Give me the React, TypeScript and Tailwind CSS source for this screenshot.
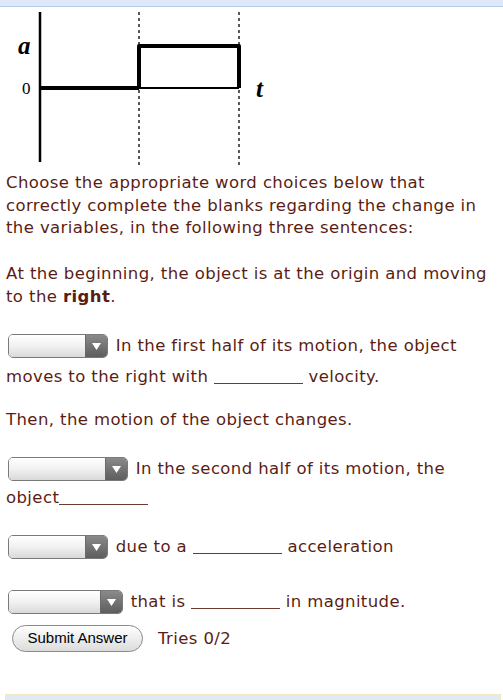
import React from "react";

const Drop = ({ w }: { w: string }) => (
  <span
    className={`inline-flex align-middle h-[24px] ${w} ml-[2px] mr-[2px] rounded-[5px] border border-[#7a7a7a] overflow-hidden`}
  >
    <span className="flex-1 bg-gradient-to-b from-[#ffffff] via-[#f1f1f1] to-[#d9d9d9]" />
    <span className="w-[22px] flex items-center justify-center bg-gradient-to-b from-[#8a8a8a] to-[#5e5e5e] border-l border-[#6a6a6a]">
      <svg width="9" height="7" viewBox="0 0 9 7">
        <path d="M0 0 H9 L4.5 7 Z" fill="#ffffff" />
      </svg>
    </span>
  </span>
);

const Blank = () => (
  <span className="inline-block w-[89px] border-b-[1.5px] border-[#6e3a30] relative top-[2px]" />
);

export default function App() {
  return (
    <div
      className="w-[503px] h-[700px] bg-white overflow-hidden text-[16.5px] tracking-[0.4px] text-[#5a1d14]"
      style={{ fontFamily: '"DejaVu Sans", Verdana, sans-serif' }}
    >
      <div className="h-[7px] bg-[#dde9f8] border-b border-[#b8cce4]" />
      <svg width="503" height="160" viewBox="0 0 503 160" className="block">
        <line x1="40" y1="5" x2="40" y2="155" stroke="#000" strokeWidth="2.5" />
        <line x1="139" y1="5" x2="139" y2="158" stroke="#000" strokeWidth="1.3" strokeDasharray="3 3" />
        <line x1="239" y1="5" x2="239" y2="158" stroke="#000" strokeWidth="1.3" strokeDasharray="3 3" />
        <line x1="40" y1="81" x2="139" y2="81" stroke="#000" strokeWidth="4" />
        <line x1="139" y1="81" x2="239" y2="81" stroke="#000" strokeWidth="2" />
        <polyline points="139,81 139,39 239,39 239,81" fill="none" stroke="#000" strokeWidth="4" strokeLinejoin="round" />
        <text x="18" y="47" fontFamily='"Liberation Serif", serif' fontStyle="italic" fontWeight="bold" fontSize="25" fill="#000">a</text>
        <text x="22" y="87" fontFamily='"Liberation Serif", serif' fontSize="17" fill="#000">0</text>
        <text x="256" y="90" fontFamily='"Liberation Serif", serif' fontStyle="italic" fontWeight="bold" fontSize="25" fill="#000">t</text>
      </svg>
      <div className="px-[6px]">
        <p className="mt-[5px] leading-[22.5px]">
          Choose the appropriate word choices below that correctly complete the blanks regarding the change in the variables, in the following three sentences:
        </p>
        <p className="mt-[23.5px] leading-[22.5px]">
          At the beginning, the object is at the origin and moving to the <b>right</b>.
        </p>
        <p className="mt-[21.5px] leading-[31px]">
          <Drop w="w-[100px]" /> In the first half of its motion, the object moves to the right with <Blank /> velocity.
        </p>
        <p className="mt-[17.5px] leading-[22.5px]">Then, the motion of the object changes.</p>
        <p className="mt-[22px] leading-[29px]">
          <Drop w="w-[120px]" /> In the second half of its motion, the object<Blank />
        </p>
        <p className="mt-[19px] leading-[31px]">
          <Drop w="w-[100px]" /> due to a <Blank /> acceleration
        </p>
        <p className="mt-[24px] leading-[31px]">
          <Drop w="w-[115px]" /> that is <Blank /> in magnitude.
        </p>
        <div className="mt-[8px] flex items-center h-[27px]">
          <button
            className="ml-[6px] h-[27px] w-[131px] rounded-full border border-[#8a8a8a] bg-gradient-to-b from-[#ffffff] to-[#dcdcdc] text-[15px] tracking-normal text-black"
            style={{ fontFamily: '"Liberation Sans", Arial, sans-serif' }}
          >
            Submit Answer
          </button>
          <span className="ml-[15px] mt-[3px]">Tries 0/2</span>
        </div>
      </div>
      <div className="mt-[42px] ml-[5px] mr-[2px] h-[20px] bg-[#dfe9f7] border border-[#efeac0]" />
    </div>
  );
}
